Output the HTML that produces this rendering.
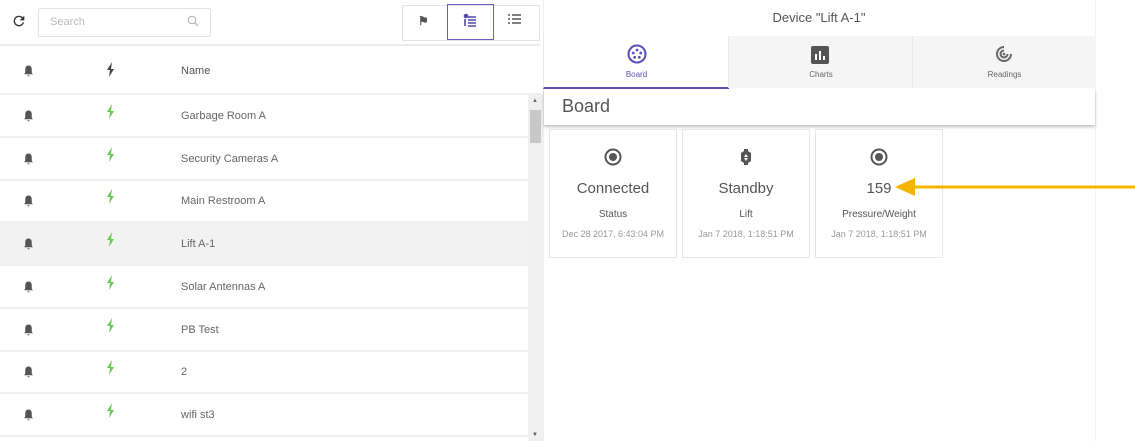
<!DOCTYPE html>
<html><head><meta charset="utf-8"><style>
body{margin:0;width:1135px;height:441px;background:#fff;font-family:"Liberation Sans",sans-serif;position:relative;overflow:hidden;color:#555}
.a{position:absolute}
.row{position:absolute;left:0;width:528px;height:41px;border-bottom:2px solid #efefef}
.row .n{position:absolute;left:181px;top:15px;font-size:11px;color:#666}
.bell{position:absolute;left:23px;top:15px;width:11px;height:13px}
.bolt{position:absolute;left:106px;top:9px}
.card{position:absolute;top:129px;width:126px;height:127px;border:1px solid #e6e6e6;text-align:center;background:#fff}
.card .v{position:absolute;top:50px;width:100%;font-size:15px;color:#555}
.card .l{position:absolute;top:79px;width:100%;font-size:10px;color:#555}
.card .d{position:absolute;top:99px;width:100%;font-size:9px;color:#999}
.tab{position:absolute;top:36px;height:52px;background:#f5f5f5;font-size:8px;text-align:center;color:#666;border-left:1px solid #e8e8e8}
.tab span{position:absolute;top:34px;left:0;width:100%}
</style></head><body>
<svg class="a" style="left:11px;top:13px" width="16" height="16" viewBox="0 0 24 24"><path d="M17.6 6.4A8 8 0 1 0 19.7 14h-2.1A6 6 0 1 1 16.2 7.8L13 11h7V4z" fill="#333"/></svg>
<div class="a" style="left:38px;top:8px;width:171px;height:27px;border:1px solid #e2e2e2;border-radius:2px"></div>
<div class="a" style="left:50px;top:16px;font-size:11px;color:#bbb">Search</div>
<svg class="a" style="left:187px;top:15px" width="12" height="12" viewBox="0 0 12 12"><circle cx="5" cy="5" r="3.8" fill="none" stroke="#aaa" stroke-width="1"/><path d="M8 8l3 3" stroke="#aaa"/></svg>
<div class="a" style="left:402px;top:5px;width:136px;height:34px;border:1px solid #e2e2e2"></div>
<div class="a" style="left:447px;top:4px;width:45px;height:34px;border:1px solid #6a5fc4"></div>
<div class="a" style="left:418px;top:14px;font-size:12px;color:#555;font-weight:bold">⚑</div>
<svg class="a" style="left:463px;top:13px" width="13" height="14" viewBox="0 0 13 14"><circle cx="3" cy="3" r="2.3" fill="#5148a8"/><path d="M5 4h8M5 7h8M5 10h8M5 13h8M2 6v7" stroke="#5148a8" stroke-width="1.6"/></svg>
<svg class="a" style="left:508px;top:14px" width="13" height="10" viewBox="0 0 13 10"><path d="M0 1h2M4 1h9M0 5h2M4 5h9M0 9h2M4 9h9" stroke="#555" stroke-width="1.6"/></svg>
<div class="a" style="left:0;top:44px;width:541px;height:2px;background:#ececec"></div>
<div class="row" style="top:46px;height:47px;width:541px">
<svg class="bell" style="top:19px" viewBox="0 0 10 12"><path d="M5 0.5c-2 0-3 1.5-3 3.5v3L1 8.5h8L8 7V4C8 2 7 .5 5 .5zM4 9.5h2a1 1 0 0 1-2 0z" fill="#555"/></svg>
<svg class="bolt" style="top:16px" width="9" height="15" viewBox="0 0 9 15"><path d="M6 0L1 8h3l-1 7 5-8H5z" fill="#444"/></svg>
<div class="n" style="top:19px;color:#555">Name</div></div>
<div id="rows"></div>
<script>
var names=["Garbage Room A","Security Cameras A","Main Restroom A","Lift A-1","Solar Antennas A","PB Test","2","wifi st3"];
var h="";names.forEach(function(n,i){var t=95+i*42.7;h+='<div class="row" style="top:'+t+'px;'+(i==3?'background:#f2f2f2':'')+'"><svg class="bell" viewBox="0 0 10 12"><path d="M5 0.5c-2 0-3 1.5-3 3.5v3L1 8.5h8L8 7V4C8 2 7 .5 5 .5zM4 9.5h2a1 1 0 0 1-2 0z" fill="#555"/></svg><svg class="bolt" width="9" height="15" viewBox="0 0 9 15"><path d="M6 0L1 8h3l-1 7 5-8H5z" fill="#6cc858"/></svg><div class="n">'+n+'</div></div>';});
document.getElementById("rows").innerHTML=h;
</script>
<div class="a" style="left:528px;top:95px;width:15px;height:346px;background:#f0f0f0"></div>
<div class="a" style="left:530px;top:110px;width:11px;height:33px;background:#c8c8c8"></div>
<div class="a" style="left:532px;top:98px;font-size:6px;color:#666">▲</div>
<div class="a" style="left:532px;top:432px;font-size:6px;color:#555">▼</div>
<div class="a" style="left:543px;top:0;width:1px;height:441px;background:#eee"></div>
<div class="a" style="left:1095px;top:0;width:1px;height:441px;background:#f3f3f3"></div>
<div class="a" style="left:543px;top:10px;width:552px;text-align:center;font-size:13px;color:#555">Device "Lift A-1"</div>
<div class="tab" style="left:543px;width:185px;background:#fff;border-bottom:2px solid #5a50b4;height:51px"><svg style="position:absolute;left:83px;top:8px" width="20" height="20" viewBox="0 0 20 20"><circle cx="10" cy="10" r="8.5" fill="none" stroke="#5a50b4" stroke-width="2"/><circle cx="10" cy="6" r="1.4" fill="#5a50b4"/><circle cx="6.3" cy="9" r="1.4" fill="#5a50b4"/><circle cx="13.7" cy="9" r="1.4" fill="#5a50b4"/><circle cx="7.7" cy="13.3" r="1.4" fill="#5a50b4"/><circle cx="12.3" cy="13.3" r="1.4" fill="#5a50b4"/></svg><span style="color:#5a50b4">Board</span></div>
<div class="tab" style="left:728px;width:184px"><svg style="position:absolute;left:82px;top:10px" width="18" height="18" viewBox="0 0 18 18"><rect width="18" height="18" rx="2" fill="#555"/><path d="M5 8v6M9 5v9M13 10v4" stroke="#fff" stroke-width="2"/></svg><span>Charts</span></div>
<div class="tab" style="left:912px;width:183px"><svg style="position:absolute;left:82px;top:9px" width="18" height="18" viewBox="0 0 18 18"><path d="M9 2A7 7 0 1 0 16 9" fill="none" stroke="#666" stroke-width="2"/><path d="M9 5.5A3.5 3.5 0 1 0 12.5 9" fill="none" stroke="#666" stroke-width="2"/><circle cx="9" cy="9" r="1.3" fill="#666"/></svg><span>Readings</span></div>
<div class="a" style="left:544px;top:89px;width:551px;height:36px;background:#fff;box-shadow:0 2px 3px rgba(0,0,0,.25)"></div>
<div class="a" style="left:562px;top:96px;font-size:18px;color:#555">Board</div>
<div class="card" style="left:549px"><svg style="position:absolute;left:54px;top:18px" width="18" height="18" viewBox="0 0 18 18"><circle cx="9" cy="9" r="7.5" fill="none" stroke="#555" stroke-width="2"/><circle cx="9" cy="9" r="4" fill="#555"/></svg><div class="v">Connected</div><div class="l">Status</div><div class="d">Dec 28 2017, 6:43:04 PM</div></div>
<div class="card" style="left:682px"><svg style="position:absolute;left:57px;top:18px" width="12" height="18" viewBox="0 0 12 18"><path d="M4 1h4v2l3 2v8l-3 2v2H4v-2L1 13V5l3-2z" fill="#555"/><path d="M6 6l-2 3h4zM6 13l-2-3h4z" fill="#fff"/></svg><div class="v">Standby</div><div class="l">Lift</div><div class="d">Jan 7 2018, 1:18:51 PM</div></div>
<div class="card" style="left:815px"><svg style="position:absolute;left:54px;top:18px" width="18" height="18" viewBox="0 0 18 18"><circle cx="9" cy="9" r="7.5" fill="none" stroke="#555" stroke-width="2"/><circle cx="9" cy="9" r="4" fill="#555"/></svg><div class="v">159</div><div class="l">Pressure/Weight</div><div class="d">Jan 7 2018, 1:18:51 PM</div></div>
<svg class="a" style="left:890px;top:176px" width="245" height="22" viewBox="0 0 245 22"><path d="M20 11H245" stroke="#f5b400" stroke-width="3"/><path d="M5 11L25 2v18z" fill="#f5b400"/></svg>
</body></html>
